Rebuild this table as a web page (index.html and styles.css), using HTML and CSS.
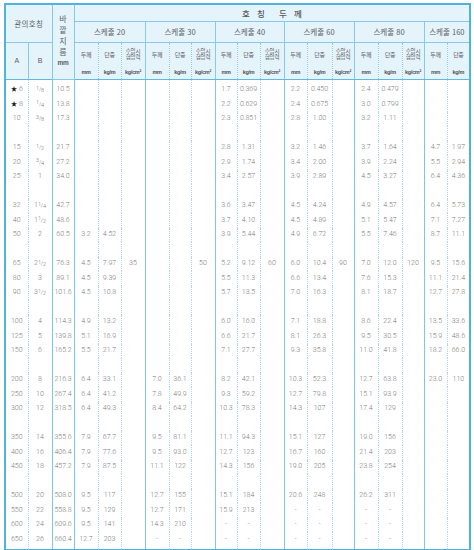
FILE: index.html
```html
<!DOCTYPE html>
<html lang="ko">
<head>
<meta charset="utf-8">
<title>관의호칭 호칭두께</title>
<link rel="stylesheet" href="styles.css">
</head>
<body>
<table class="pipe">
<colgroup>
<col><col><col><col><col><col><col><col><col><col><col><col><col><col><col><col><col><col><col><col>
</colgroup>
<thead>
<tr class="h1">
<th colspan="2" rowspan="2" class="nom">관의호칭</th>
<th rowspan="3" class="od"><span class="vt">바<br>깥<br>지<br>름<br><em>mm</em></span></th>
<th colspan="17" class="title">호&nbsp;&nbsp;&nbsp;칭&nbsp;&nbsp;&nbsp;&nbsp;&nbsp;&nbsp;두&nbsp;&nbsp;&nbsp;께</th>
</tr>
<tr class="h2">
<th colspan="3" class="sch">스케줄 20</th>
<th colspan="3" class="sch">스케줄 30</th>
<th colspan="3" class="sch">스케줄 40</th>
<th colspan="3" class="sch">스케줄 60</th>
<th colspan="3" class="sch">스케줄 80</th>
<th colspan="2" class="sch last">스케줄 160</th>
</tr>
<tr class="h3">
<th class="ab">A</th><th class="ab">B</th>
<th class="sub">두께<em>mm</em></th><th class="sub">단중<em>kg/m</em></th><th class="sub p"><span class="two">수압시<br>험압력</span><em>kg/cm²</em></th>
<th class="sub">두께<em>mm</em></th><th class="sub">단중<em>kg/m</em></th><th class="sub p"><span class="two">수압시<br>험압력</span><em>kg/cm²</em></th>
<th class="sub">두께<em>mm</em></th><th class="sub">단중<em>kg/m</em></th><th class="sub p"><span class="two">수압시<br>험압력</span><em>kg/cm²</em></th>
<th class="sub">두께<em>mm</em></th><th class="sub">단중<em>kg/m</em></th><th class="sub p"><span class="two">수압시<br>험압력</span><em>kg/cm²</em></th>
<th class="sub">두께<em>mm</em></th><th class="sub">단중<em>kg/m</em></th><th class="sub p"><span class="two">수압시<br>험압력</span><em>kg/cm²</em></th>
<th class="sub">두께<em>mm</em></th><th class="sub last">단중<em>kg/m</em></th>
</tr>
</thead>
<tbody>
<tr class="first"><td><span class="star">★</span> 6</td><td><span class="fr"><sup>1</sup>/<sub>8</sub></span></td><td>10.5</td><td></td><td></td><td></td><td></td><td></td><td></td><td>1.7</td><td>0.369</td><td></td><td>2.2</td><td>0.450</td><td></td><td>2.4</td><td>0.479</td><td></td><td></td><td></td></tr>
<tr><td><span class="star">★</span> 8</td><td><span class="fr"><sup>1</sup>/<sub>4</sub></span></td><td>13.8</td><td></td><td></td><td></td><td></td><td></td><td></td><td>2.2</td><td>0.629</td><td></td><td>2.4</td><td>0.675</td><td></td><td>3.0</td><td>0.799</td><td></td><td></td><td></td></tr>
<tr><td>10</td><td><span class="fr"><sup>3</sup>/<sub>8</sub></span></td><td>17.3</td><td></td><td></td><td></td><td></td><td></td><td></td><td>2.3</td><td>0.851</td><td></td><td>2.8</td><td>1.00</td><td></td><td>3.2</td><td>1.11</td><td></td><td></td><td></td></tr>
<tr><td></td><td></td><td></td><td></td><td></td><td></td><td></td><td></td><td></td><td></td><td></td><td></td><td></td><td></td><td></td><td></td><td></td><td></td><td></td><td></td></tr>
<tr><td>15</td><td><span class="fr"><sup>1</sup>/<sub>2</sub></span></td><td>21.7</td><td></td><td></td><td></td><td></td><td></td><td></td><td>2.8</td><td>1.31</td><td></td><td>3.2</td><td>1.46</td><td></td><td>3.7</td><td>1.64</td><td></td><td>4.7</td><td>1.97</td></tr>
<tr><td>20</td><td><span class="fr"><sup>3</sup>/<sub>4</sub></span></td><td>27.2</td><td></td><td></td><td></td><td></td><td></td><td></td><td>2.9</td><td>1.74</td><td></td><td>3.4</td><td>2.00</td><td></td><td>3.9</td><td>2.24</td><td></td><td>5.5</td><td>2.94</td></tr>
<tr><td>25</td><td>1</td><td>34.0</td><td></td><td></td><td></td><td></td><td></td><td></td><td>3.4</td><td>2.57</td><td></td><td>3.9</td><td>2.89</td><td></td><td>4.5</td><td>3.27</td><td></td><td>6.4</td><td>4.36</td></tr>
<tr><td></td><td></td><td></td><td></td><td></td><td></td><td></td><td></td><td></td><td></td><td></td><td></td><td></td><td></td><td></td><td></td><td></td><td></td><td></td><td></td></tr>
<tr><td>32</td><td>1<span class="fr"><sup>1</sup>/<sub>4</sub></span></td><td>42.7</td><td></td><td></td><td></td><td></td><td></td><td></td><td>3.6</td><td>3.47</td><td></td><td>4.5</td><td>4.24</td><td></td><td>4.9</td><td>4.57</td><td></td><td>6.4</td><td>5.73</td></tr>
<tr><td>40</td><td>1<span class="fr"><sup>1</sup>/<sub>2</sub></span></td><td>48.6</td><td></td><td></td><td></td><td></td><td></td><td></td><td>3.7</td><td>4.10</td><td></td><td>4.5</td><td>4.89</td><td></td><td>5.1</td><td>5.47</td><td></td><td>7.1</td><td>7.27</td></tr>
<tr><td>50</td><td>2</td><td>60.5</td><td>3.2</td><td>4.52</td><td></td><td></td><td></td><td></td><td>3.9</td><td>5.44</td><td></td><td>4.9</td><td>6.72</td><td></td><td>5.5</td><td>7.46</td><td></td><td>8.7</td><td>11.1</td></tr>
<tr><td></td><td></td><td></td><td></td><td></td><td></td><td></td><td></td><td></td><td></td><td></td><td></td><td></td><td></td><td></td><td></td><td></td><td></td><td></td><td></td></tr>
<tr><td>65</td><td>2<span class="fr"><sup>1</sup>/<sub>2</sub></span></td><td>76.3</td><td>4.5</td><td>7.97</td><td>35</td><td></td><td></td><td>50</td><td>5.2</td><td>9.12</td><td>60</td><td>6.0</td><td>10.4</td><td>90</td><td>7.0</td><td>12.0</td><td>120</td><td>9.5</td><td>15.6</td></tr>
<tr><td>80</td><td>3</td><td>89.1</td><td>4.5</td><td>9.39</td><td></td><td></td><td></td><td></td><td>5.5</td><td>11.3</td><td></td><td>6.6</td><td>13.4</td><td></td><td>7.6</td><td>15.3</td><td></td><td>11.1</td><td>21.4</td></tr>
<tr><td>90</td><td>3<span class="fr"><sup>1</sup>/<sub>2</sub></span></td><td>101.6</td><td>4.5</td><td>10.8</td><td></td><td></td><td></td><td></td><td>5.7</td><td>13.5</td><td></td><td>7.0</td><td>16.3</td><td></td><td>8.1</td><td>18.7</td><td></td><td>12.7</td><td>27.8</td></tr>
<tr><td></td><td></td><td></td><td></td><td></td><td></td><td></td><td></td><td></td><td></td><td></td><td></td><td></td><td></td><td></td><td></td><td></td><td></td><td></td><td></td></tr>
<tr><td>100</td><td>4</td><td>114.3</td><td>4.9</td><td>13.2</td><td></td><td></td><td></td><td></td><td>6.0</td><td>16.0</td><td></td><td>7.1</td><td>18.8</td><td></td><td>8.6</td><td>22.4</td><td></td><td>13.5</td><td>33.6</td></tr>
<tr><td>125</td><td>5</td><td>139.8</td><td>5.1</td><td>16.9</td><td></td><td></td><td></td><td></td><td>6.6</td><td>21.7</td><td></td><td>8.1</td><td>26.3</td><td></td><td>9.5</td><td>30.5</td><td></td><td>15.9</td><td>48.6</td></tr>
<tr><td>150</td><td>6</td><td>165.2</td><td>5.5</td><td>21.7</td><td></td><td></td><td></td><td></td><td>7.1</td><td>27.7</td><td></td><td>9.3</td><td>35.8</td><td></td><td>11.0</td><td>41.8</td><td></td><td>18.2</td><td>66.0</td></tr>
<tr><td></td><td></td><td></td><td></td><td></td><td></td><td></td><td></td><td></td><td></td><td></td><td></td><td></td><td></td><td></td><td></td><td></td><td></td><td></td><td></td></tr>
<tr><td>200</td><td>8</td><td>216.3</td><td>6.4</td><td>33.1</td><td></td><td>7.0</td><td>36.1</td><td></td><td>8.2</td><td>42.1</td><td></td><td>10.3</td><td>52.3</td><td></td><td>12.7</td><td>63.8</td><td></td><td>23.0</td><td>110</td></tr>
<tr><td>250</td><td>10</td><td>267.4</td><td>6.4</td><td>41.2</td><td></td><td>7.8</td><td>49.9</td><td></td><td>9.3</td><td>59.2</td><td></td><td>12.7</td><td>79.8</td><td></td><td>15.1</td><td>93.9</td><td></td><td></td><td></td></tr>
<tr><td>300</td><td>12</td><td>318.5</td><td>6.4</td><td>49.3</td><td></td><td>8.4</td><td>64.2</td><td></td><td>10.3</td><td>78.3</td><td></td><td>14.3</td><td>107</td><td></td><td>17.4</td><td>129</td><td></td><td></td><td></td></tr>
<tr><td></td><td></td><td></td><td></td><td></td><td></td><td></td><td></td><td></td><td></td><td></td><td></td><td></td><td></td><td></td><td></td><td></td><td></td><td></td><td></td></tr>
<tr><td>350</td><td>14</td><td>355.6</td><td>7.9</td><td>67.7</td><td></td><td>9.5</td><td>81.1</td><td></td><td>11.1</td><td>94.3</td><td></td><td>15.1</td><td>127</td><td></td><td>19.0</td><td>156</td><td></td><td></td><td></td></tr>
<tr><td>400</td><td>16</td><td>406.4</td><td>7.9</td><td>77.6</td><td></td><td>9.5</td><td>93.0</td><td></td><td>12.7</td><td>123</td><td></td><td>16.7</td><td>160</td><td></td><td>21.4</td><td>203</td><td></td><td></td><td></td></tr>
<tr><td>450</td><td>18</td><td>457.2</td><td>7.9</td><td>87.5</td><td></td><td>11.1</td><td>122</td><td></td><td>14.3</td><td>156</td><td></td><td>19.0</td><td>205</td><td></td><td>23.8</td><td>254</td><td></td><td></td><td></td></tr>
<tr><td></td><td></td><td></td><td></td><td></td><td></td><td></td><td></td><td></td><td></td><td></td><td></td><td></td><td></td><td></td><td></td><td></td><td></td><td></td><td></td></tr>
<tr><td>500</td><td>20</td><td>508.0</td><td>9.5</td><td>117</td><td></td><td>12.7</td><td>155</td><td></td><td>15.1</td><td>184</td><td></td><td>20.6</td><td>248</td><td></td><td>26.2</td><td>311</td><td></td><td></td><td></td></tr>
<tr><td>550</td><td>22</td><td>558.8</td><td>9.5</td><td>129</td><td></td><td>12.7</td><td>171</td><td></td><td>15.9</td><td>213</td><td></td><td>-</td><td>-</td><td></td><td>-</td><td>-</td><td></td><td></td><td></td></tr>
<tr><td>600</td><td>24</td><td>609.6</td><td>9.5</td><td>141</td><td></td><td>14.3</td><td>210</td><td></td><td>-</td><td>-</td><td></td><td>-</td><td>-</td><td></td><td>-</td><td>-</td><td></td><td></td><td></td></tr>
<tr class="final"><td>650</td><td>26</td><td>660.4</td><td>12.7</td><td>203</td><td></td><td>-</td><td>-</td><td></td><td>-</td><td>-</td><td></td><td>-</td><td>-</td><td></td><td>-</td><td>-</td><td></td><td></td><td></td></tr>
</tbody>
</table>
</body>
</html>
```
FILE: styles.css
```css
html, body {
  margin: 0;
  padding: 0;
  background: #ffffff;
}
body {
  padding: 3px 0 0 4px;
}
.pipe {
  border-collapse: collapse;
  table-layout: fixed;
  width: 466px;
  font-family: Roboto, "Noto Sans CJK KR", sans-serif;
  font-weight: 300;
  font-size: 7px;
  color: #7a7a7a;
  border-left: 2px solid #4fb2df;
  border-right: 2px solid #4fb2df;
  border-top: 2px solid #4fb2df;
  border-bottom: 3px solid #4fb2df;
}
col:nth-child(1) { width: 23px; }
col:nth-child(2) { width: 24px; }
col:nth-child(3) { width: 22px; }
col:nth-child(4) { width: 24px; }
col:nth-child(5) { width: 23px; }
col:nth-child(6) { width: 24px; }
col:nth-child(7) { width: 24px; }
col:nth-child(8) { width: 22px; }
col:nth-child(9) { width: 24px; }
col:nth-child(10) { width: 22px; }
col:nth-child(11) { width: 23px; }
col:nth-child(12) { width: 24px; }
col:nth-child(13) { width: 23px; }
col:nth-child(14) { width: 25px; }
col:nth-child(15) { width: 22px; }
col:nth-child(16) { width: 24px; }
col:nth-child(17) { width: 24px; }
col:nth-child(18) { width: 22px; }
col:nth-child(19) { width: 23px; }
col:nth-child(20) { width: 23px; }

thead th {
  background: #e5f3fb;
  font-family: "Noto Sans CJK KR", sans-serif;
  font-weight: 400;
  color: #5b5f63;
  padding: 0;
  border: 1px solid #86c9e8;
  text-align: center;
  vertical-align: middle;
  line-height: 1;
  overflow: hidden;
}
.h1 { height: 17px; }
.h2 { height: 21px; }
.h3 { height: 37px; }

.nom { font-size: 7.5px; letter-spacing: 0.3px; }
.title { font-size: 8.5px; font-weight: 500; color: #55595d; }
.sch { font-size: 7.5px; }
.od { font-size: 8px; }
.vt { display: inline-block; line-height: 10.8px; }
.vt em, .sub em {
  font-style: normal;
  font-family: "Liberation Sans", Arial, sans-serif;
  font-weight: 700;
  letter-spacing: -0.3px;
}
.vt em { font-size: 6.5px; }
.ab { font-family: "Liberation Sans", Arial, sans-serif; font-size: 7px; }
thead .h3 th.sub {
  font-size: 6px;
  letter-spacing: -0.3px;
  vertical-align: top;
  padding-top: 9px;
}
.sub em {
  display: block;
  font-size: 5.5px;
  margin-top: 12px;
  color: #4f5357;
}
.sub.p .two { display: block; line-height: 6.5px; font-size: 5.5px; margin-top: -4px; }
.sub.p em { margin-top: 9px; }

thead .h3 .sub { border-left-style: dotted; border-right-style: dotted; }
thead .h3 .sub.p,
thead .h3 .sub.last { border-right-style: solid; }
thead .h3 .sub.p + .sub { border-left-style: solid; }
thead .h3 .ab + .ab { border-right-style: solid; }
thead .h3 .ab:first-child { border-right-style: solid; }
thead tr.h3 th { border-bottom: 1px solid #5fb9e2; }

tbody td {
  height: 14.5px;
  padding: 0;
  text-align: center;
  vertical-align: middle;
  line-height: 1;
  white-space: nowrap;
  border-right: 1px dotted #a9d7ee;
}
tbody td:nth-child(2),
tbody td:nth-child(3),
tbody td:nth-child(6),
tbody td:nth-child(9),
tbody td:nth-child(12),
tbody td:nth-child(15),
tbody td:nth-child(18) {
  border-right: 1px solid #7fc6e6;
}
tbody td:nth-child(20) { border-right: none; }
tbody tr.first td { padding-top: 3px; }
tbody tr.final td { padding-bottom: 2px; }

.star { color: #222; font-size: 6.5px; }
.fr { font-size: 6px; letter-spacing: -0.2px; }
.fr sup, .fr sub {
  font-size: 5.5px;
  vertical-align: baseline;
  position: relative;
}
.fr sup { top: -1.5px; }
.fr sub { top: 1px; }
```
